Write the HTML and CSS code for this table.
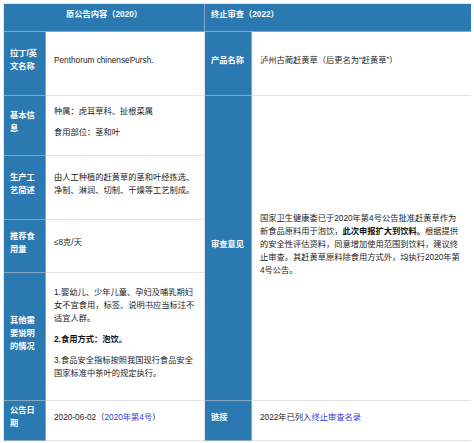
FILE: index.html
```html
<!DOCTYPE html>
<html lang="zh-CN">
<head>
<meta charset="utf-8">
<title>赶黄草 对比</title>
<link rel="stylesheet" href="styles.css">
</head>
<body>
<table class="cmp">
  <colgroup>
    <col class="c-label-l">
    <col class="c-text-l">
    <col class="c-label-r">
    <col class="c-text-r">
  </colgroup>
  <tr class="r-head">
    <th colspan="2" class="head head-center">原公告内容（2020）</th>
    <th colspan="2" class="head head-left">终止审查（2022）</th>
  </tr>
  <tr class="r1">
    <th class="label">拉丁/英文名称</th>
    <td class="text">Penthorum chinensePursh.</td>
    <th class="label">产品名称</th>
    <td class="text">泸州古蔺赶黄草（后更名为“赶黄草”）</td>
  </tr>
  <tr class="r2">
    <th class="label">基本信息</th>
    <td class="text"><p>种属：虎耳草科、扯根菜属</p><p>食用部位：茎和叶</p></td>
    <th class="label" rowspan="4">审查意见</th>
    <td class="text" rowspan="4">国家卫生健康委已于2020年第4号公告批准赶黄草作为<br>新食品原料用于泡饮，<strong>此次申报扩大到饮料。</strong>根据提供<br>的安全性评估资料，同意增加使用范围到饮料，建议终<br>止审查。其赶黄草原料除食用方式外，均执行2020年第<br>4号公告。</td>
  </tr>
  <tr class="r3">
    <th class="label">生产工艺简述</th>
    <td class="text">由人工种植的赶黄草的茎和叶经拣选、净制、淋润、切制、干燥等工艺制成。</td>
  </tr>
  <tr class="r4">
    <th class="label">推荐食用量</th>
    <td class="text">≤8克/天</td>
  </tr>
  <tr class="r5">
    <th class="label">其他需要说明的情况</th>
    <td class="text"><p>1.婴幼儿、少年儿童、孕妇及哺乳期妇女不宜食用，标签、说明书应当标注不适宜人群。</p><p><strong>2.食用方式：泡饮。</strong></p><p>3.食品安全指标按照我国现行食品安全国家标准中茶叶的规定执行。</p></td>
  </tr>
  <tr class="r6">
    <th class="label">公告日期</th>
    <td class="text">2020-06-02（<a class="lnk" href="#">2020年第4号</a>）</td>
    <th class="label">链接</th>
    <td class="text">2022年已列入<a class="lnk" href="#">终止审查名录</a></td>
  </tr>
</table>
</body>
</html>
```
FILE: styles.css
```css
html, body {
  background: #ffffff;
}
body {
  margin: 3px;
  font-family: "Liberation Sans", "Noto Sans CJK SC", sans-serif;
  font-size: 8.25px;
  line-height: 13px;
  color: #1c1c1c;
}
.cmp {
  width: 469px;
  border-collapse: collapse;
  table-layout: fixed;
}
.c-label-l { width: 42px; }
.c-text-l { width: 159px; }
.c-label-r { width: 47px; }
.c-text-r { width: 221px; }

.cmp th,
.cmp td {
  border: 1px solid rgba(205, 205, 205, 0.55);
  vertical-align: middle;
}
.head {
  background: #2a7ab1;
  color: #ffffff;
  font-weight: bold;
  padding: 0 6px 7px;
}
.head-center { text-align: center; }
.head-left { text-align: left; }
.label {
  background: #2a7ab1;
  color: #ffffff;
  font-weight: bold;
  text-align: left;
  padding: 0 6px 7px;
}
.text {
  background: #ffffff;
  padding: 0 8px 7px 8px;
}
.text p {
  margin: 0;
}
.text p + p {
  margin-top: 8px;
}
.text strong {
  font-weight: bold;
  color: #111111;
}
.lnk {
  color: #3038e6;
  text-decoration: none;
}
.r-head { height: 28px; }
.r1 { height: 64px; }
.r2 { height: 60px; }
.r3 { height: 64px; }
.r4 { height: 53px; }
.r5 { height: 128px; }
.r6 { height: 40px; }
```
